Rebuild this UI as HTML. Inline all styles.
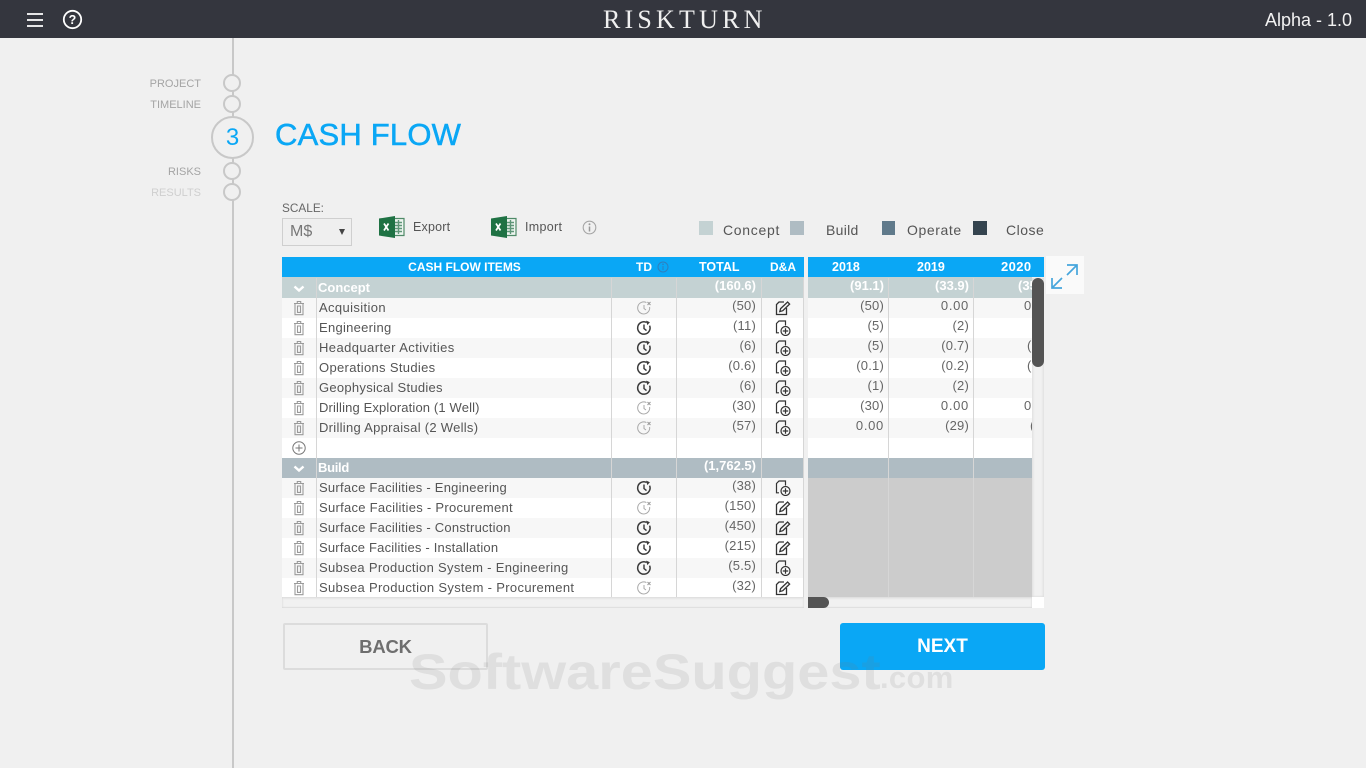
<!DOCTYPE html>
<html><head><meta charset="utf-8"><title>Riskturn</title>
<style>
html,body{margin:0;padding:0;width:1366px;height:768px;overflow:hidden;background:#f0f0f0;font-family:"Liberation Sans",sans-serif;color:#555}
.a{position:absolute;white-space:nowrap}
.bg{position:absolute}
.step{position:absolute;right:1165px;font-size:11px;color:#a4a4a4;white-space:nowrap;line-height:14px}
.c{position:absolute;width:14px;height:14px;border:2px solid #c8c8c8;border-radius:50%;left:223px;background:#f0f0f0}
.row{position:absolute;left:282px;width:522px;height:20px}
.rrow{position:absolute;left:808px;width:224px;height:20px}
.t{position:absolute;left:37px;top:0;line-height:20px;font-size:13px;color:#555;letter-spacing:.28px;white-space:nowrap}
.v{position:absolute;top:-2px;line-height:20px;font-size:13px;color:#666;text-align:right;white-space:nowrap;letter-spacing:.2px}
.tot{right:48px}
.y1{right:148px}.y2{right:63px}
.ic{position:absolute}
.h{position:absolute;top:257px;height:20px;line-height:20px;color:#fff;font-weight:bold;font-size:12px;white-space:nowrap;text-align:center}
.ln{position:absolute;width:1px;background:#d6d6d6}
.gh{color:#fff;font-weight:bold;font-size:13px}
</style></head><body>
<svg width="0" height="0" style="position:absolute"><defs>
<symbol id="trash" viewBox="0 0 12 16"><path d="M1 3.500h10M4.300 3.300V1.500h3.400v1.800M2 3.500v11.200h8V3.500M4.500 6v6.400h3V6z" fill="none" stroke="#9a9a9a" stroke-width="1.100"/></symbol>
<symbol id="clock" viewBox="0 0 16 16"><path d="M10.600 2.400A6.200 6.200 0 1 0 13.600 5.600" fill="none" stroke="#3a3a3a" stroke-width="1.500"/><path d="M8 4.500V8.600L10.500 10.600" fill="none" stroke="#3a3a3a" stroke-width="1.400"/><path d="M10.200 .6l3.700 1.600-2.600 2.900z" fill="#3a3a3a"/></symbol>
<symbol id="clockx" viewBox="0 0 16 16"><path d="M10.400 2.600A6 6 0 1 0 13.600 7" fill="none" stroke="#a8a8a8" stroke-width="1"/><path d="M8 5V8.500L10 10" fill="none" stroke="#a8a8a8"/><path d="M11.500 2l3 3M14.500 2l-3 3" stroke="#999" stroke-width="1"/></symbol>
<symbol id="edit" viewBox="0 0 16 16"><path d="M9 2H4L1.500 4.500V14.500H11.500V8" fill="none" stroke="#333" stroke-width="1.300"/><path d="M4.800 11.600l.8-3 7-6.600 2 2.100-6.800 6.600z" fill="#f4f4f4" stroke="#333" stroke-width="1.300"/></symbol>
<symbol id="add" viewBox="0 0 16 16"><path d="M4 12.800H1.500V3.500L4 1H10.500V5.500" fill="none" stroke="#333" stroke-width="1.200"/><circle cx="10.500" cy="11" r="4.500" fill="#fafafa" stroke="#333" stroke-width="1.200"/><path d="M10.500 8.300v5.400M7.800 11h5.400" stroke="#333" stroke-width="1.200"/></symbol>
<symbol id="xl" viewBox="0 0 26 22"><path d="M13 2.500H25V19.500H13z" fill="#eef5f0" stroke="#4f8a68" stroke-width="1.200"/><path d="M16 6.500h7M16 9.500h7M16 12.500h7M16 15.500h7M19.500 4v14" stroke="#5f9678" stroke-width="1.400"/><path d="M0 2.500L16 0V22L0 19.500z" fill="#1f7244"/><path d="M5 7.500l4.500 7M9.500 7.500l-4.500 7" stroke="#fff" stroke-width="1.700"/></symbol>
</defs></svg>

<!-- top bar -->
<div class="bg" style="left:0;top:0;width:1366px;height:38px;background:#34363e"></div>
<svg class="a" style="left:27px;top:13px" width="17" height="15"><path d="M0 1h16M0 7h16M0 13h16" stroke="#fff" stroke-width="1.800"/></svg>
<svg class="a" style="left:62px;top:9px" width="21" height="21"><circle cx="10.500" cy="10.500" r="8.700" fill="none" stroke="#fff" stroke-width="1.800"/><text x="10.500" y="15" text-anchor="middle" font-family="Liberation Sans" font-weight="bold" font-size="12.500" fill="#fff">?</text></svg>
<div class="a" style="left:603px;top:6px;font-family:'Liberation Serif',serif;font-size:26px;line-height:28px;color:#f0f0f0;letter-spacing:4.200px">RISKTURN</div>
<div class="a" style="right:14px;top:9px;font-size:18px;line-height:22px;color:#f2f2f2">Alpha - 1.0</div>

<!-- stepper -->
<div class="bg" style="left:232px;top:38px;width:2px;height:730px;background:#c8c8c8"></div>
<div class="c" style="top:74px"></div>
<div class="c" style="top:95px"></div>
<div class="c" style="top:162px"></div>
<div class="c" style="top:183px"></div>
<div class="a" style="left:211px;top:116px;width:39px;height:39px;border:2px solid #c8c8c8;border-radius:50%;background:#f0f0f0;color:#0aa7f5;font-size:24px;line-height:40px;text-align:center">3</div>
<div class="step" style="top:77px">PROJECT</div>
<div class="step" style="top:98px">TIMELINE</div>
<div class="step" style="top:165px">RISKS</div>
<div class="step" style="top:186px;color:#cfcfcf">RESULTS</div>
<div class="a" style="left:275px;top:116px;color:#0aa7f5;font-size:31px;line-height:38px;letter-spacing:.2px;-webkit-text-stroke:.5px #0aa7f5">CASH FLOW</div>

<!-- toolbar -->
<div class="a" style="left:282px;top:201px;font-size:11.800px;line-height:14px;color:#666">SCALE:</div>
<div class="a" style="left:282px;top:218px;width:68px;height:26px;border:1px solid #cfcfcf;background:#efefef;font-size:16px;line-height:25px;color:#777;text-indent:7px">M$</div>
<div class="a" style="left:339px;top:229px;width:0;height:0;border-left:3.500px solid transparent;border-right:3.500px solid transparent;border-top:6px solid #444"></div>
<svg class="a" style="left:379px;top:216px" width="26" height="22"><use href="#xl"/></svg>
<div class="a" style="left:413px;top:219px;font-size:12.500px;line-height:16px;color:#555;letter-spacing:.2px">Export</div>
<svg class="a" style="left:491px;top:216px" width="26" height="22"><use href="#xl"/></svg>
<div class="a" style="left:525px;top:219px;font-size:12.500px;line-height:16px;color:#555;letter-spacing:.3px">Import</div>
<svg class="a" style="left:582px;top:220px" width="15" height="15"><circle cx="7.500" cy="7.500" r="6.300" fill="none" stroke="#a5a5a5" stroke-width="1.100"/><path d="M7.500 6.500V11.500" stroke="#999" stroke-width="1.500"/><circle cx="7.500" cy="4.300" r="1" fill="#999"/></svg>

<!-- legend -->
<div class="bg" style="left:699px;top:221px;width:14px;height:14px;background:#c4d2d3"></div>
<div class="a" style="left:723px;top:221px;font-size:14px;line-height:18px;letter-spacing:.7px">Concept</div>
<div class="bg" style="left:790px;top:221px;width:14px;height:14px;background:#afbcc3"></div>
<div class="a" style="left:826px;top:221px;font-size:14px;line-height:18px;letter-spacing:.3px">Build</div>
<div class="bg" style="left:882px;top:221px;width:13px;height:14px;background:#607a8b"></div>
<div class="a" style="left:907px;top:221px;font-size:14px;line-height:18px;letter-spacing:.6px">Operate</div>
<div class="bg" style="left:973px;top:221px;width:14px;height:14px;background:#35444f"></div>
<div class="a" style="left:1006px;top:221px;font-size:14px;line-height:18px;letter-spacing:.5px">Close</div>

<!-- left table header -->
<div class="bg" style="left:282px;top:257px;width:522px;height:20px;background:#0aa7f5"></div>
<div class="h" style="left:317px;width:295px">CASH FLOW ITEMS</div>
<div class="h" style="left:636px">TD</div>
<svg class="a" style="left:657px;top:261px" width="12" height="12"><circle cx="6" cy="6" r="5" fill="none" stroke="#2f7fbd"/><path d="M6 5v4" stroke="#2f7fbd"/><circle cx="6" cy="3.300" r=".8" fill="#2f7fbd"/></svg>
<div class="h" style="left:699px;font-size:12.500px">TOTAL</div>
<div class="h" style="left:770px">D&amp;A</div>
<div class="bg" style="left:808px;top:257px;width:236px;height:20px;background:#0aa7f5"></div>
<div class="h" style="left:832px;font-size:12.500px">2018</div>
<div class="h" style="left:917px;font-size:12.500px">2019</div>
<div class="h" style="left:1001px;font-size:13px;letter-spacing:.4px">2020</div>
<div class="bg" style="left:1046px;top:256px;width:38px;height:38px;background:#fafafa"></div>
<svg class="a" style="left:1046px;top:256px" width="38" height="38"><path d="M31 9L21 19M21 9H31V19M6 32L16 22M6 22V32H16" fill="none" stroke="#45a5dc" stroke-width="1.700"/></svg>

<!-- left rows -->
<div class="row" style="top:277px;height:21px;background:#c4d2d3"><div class="t gh" style="letter-spacing:0;left:36px;top:1px">Concept</div><div class="v tot" style="color:#fff;font-weight:bold;top:-1px;letter-spacing:0">(160.6)</div></div>
<div class="row" style="top:298px;background:#f7f7f7"><div class="t" style="letter-spacing:.37px">Acquisition</div><div class="v tot">(50)</div></div>
<div class="row" style="top:318px;background:#fff"><div class="t">Engineering</div><div class="v tot">(11)</div></div>
<div class="row" style="top:338px;background:#f7f7f7"><div class="t" style="letter-spacing:.42px">Headquarter Activities</div><div class="v tot">(6)</div></div>
<div class="row" style="top:358px;background:#fff"><div class="t" style="letter-spacing:.33px">Operations Studies</div><div class="v tot">(0.6)</div></div>
<div class="row" style="top:378px;background:#f7f7f7"><div class="t">Geophysical Studies</div><div class="v tot">(6)</div></div>
<div class="row" style="top:398px;background:#fff"><div class="t" style="letter-spacing:.14px">Drilling Exploration (1 Well)</div><div class="v tot">(30)</div></div>
<div class="row" style="top:418px;background:#f7f7f7"><div class="t">Drilling Appraisal (2 Wells)</div><div class="v tot">(57)</div></div>
<div class="row" style="top:438px;background:#fff"></div>
<div class="row" style="top:458px;background:#afbcc3"><div class="t gh" style="letter-spacing:-.3px;left:36px">Build</div><div class="v tot" style="color:#fff;font-weight:bold;letter-spacing:0">(1,762.5)</div></div>
<div class="row" style="top:478px;background:#f7f7f7"><div class="t" style="letter-spacing:.25px">Surface Facilities - Engineering</div><div class="v tot">(38)</div></div>
<div class="row" style="top:498px;background:#fff"><div class="t">Surface Facilities - Procurement</div><div class="v tot">(150)</div></div>
<div class="row" style="top:518px;background:#f7f7f7"><div class="t" style="letter-spacing:.25px">Surface Facilities - Construction</div><div class="v tot">(450)</div></div>
<div class="row" style="top:538px;background:#fff"><div class="t" style="letter-spacing:.2px">Surface Facilities - Installation</div><div class="v tot">(215)</div></div>
<div class="row" style="top:558px;background:#f7f7f7"><div class="t" style="letter-spacing:.31px">Subsea Production System - Engineering</div><div class="v tot">(5.5)</div></div>
<div class="row" style="top:578px;background:#fff;height:19px"><div class="t" style="letter-spacing:.33px">Subsea Production System - Procurement</div><div class="v tot">(32)</div></div>
<div class="ln" style="left:316px;top:278px;height:319px"></div>
<div class="ln" style="left:611px;top:278px;height:319px"></div>
<div class="ln" style="left:676px;top:278px;height:319px"></div>
<div class="ln" style="left:761px;top:278px;height:319px"></div>
<div class="ln" style="left:803px;top:278px;height:319px"></div>

<!-- chevrons -->
<svg class="a" style="left:293px;top:285px" width="12" height="8"><path d="M1.500 1.500L6 5.500L10.500 1.500" fill="none" stroke="#fff" stroke-width="2.400"/></svg>
<svg class="a" style="left:293px;top:465px" width="12" height="8"><path d="M1.500 1.500L6 5.500L10.500 1.500" fill="none" stroke="#fff" stroke-width="2.400"/></svg>
<svg class="a" style="left:292px;top:441px" width="14" height="14"><circle cx="7" cy="7" r="6.200" fill="none" stroke="#777"/><path d="M7 3.500v7M3.500 7h7" stroke="#777"/></svg>

<!-- trash icons -->
<svg class="ic" style="left:293px;top:300px" width="12" height="16"><use href="#trash"/></svg>
<svg class="ic" style="left:293px;top:320px" width="12" height="16"><use href="#trash"/></svg>
<svg class="ic" style="left:293px;top:340px" width="12" height="16"><use href="#trash"/></svg>
<svg class="ic" style="left:293px;top:360px" width="12" height="16"><use href="#trash"/></svg>
<svg class="ic" style="left:293px;top:380px" width="12" height="16"><use href="#trash"/></svg>
<svg class="ic" style="left:293px;top:400px" width="12" height="16"><use href="#trash"/></svg>
<svg class="ic" style="left:293px;top:420px" width="12" height="16"><use href="#trash"/></svg>
<svg class="ic" style="left:293px;top:480px" width="12" height="16"><use href="#trash"/></svg>
<svg class="ic" style="left:293px;top:500px" width="12" height="16"><use href="#trash"/></svg>
<svg class="ic" style="left:293px;top:520px" width="12" height="16"><use href="#trash"/></svg>
<svg class="ic" style="left:293px;top:540px" width="12" height="16"><use href="#trash"/></svg>
<svg class="ic" style="left:293px;top:560px" width="12" height="16"><use href="#trash"/></svg>
<svg class="ic" style="left:293px;top:580px" width="12" height="16"><use href="#trash"/></svg>

<!-- clocks -->
<svg class="ic" style="left:636px;top:300px" width="16" height="16"><use href="#clockx"/></svg>
<svg class="ic" style="left:636px;top:320px" width="16" height="16"><use href="#clock"/></svg>
<svg class="ic" style="left:636px;top:340px" width="16" height="16"><use href="#clock"/></svg>
<svg class="ic" style="left:636px;top:360px" width="16" height="16"><use href="#clock"/></svg>
<svg class="ic" style="left:636px;top:380px" width="16" height="16"><use href="#clock"/></svg>
<svg class="ic" style="left:636px;top:400px" width="16" height="16"><use href="#clockx"/></svg>
<svg class="ic" style="left:636px;top:420px" width="16" height="16"><use href="#clockx"/></svg>
<svg class="ic" style="left:636px;top:480px" width="16" height="16"><use href="#clock"/></svg>
<svg class="ic" style="left:636px;top:500px" width="16" height="16"><use href="#clockx"/></svg>
<svg class="ic" style="left:636px;top:520px" width="16" height="16"><use href="#clock"/></svg>
<svg class="ic" style="left:636px;top:540px" width="16" height="16"><use href="#clock"/></svg>
<svg class="ic" style="left:636px;top:560px" width="16" height="16"><use href="#clock"/></svg>
<svg class="ic" style="left:636px;top:580px" width="16" height="16"><use href="#clockx"/></svg>

<!-- D&A -->
<svg class="ic" style="left:775px;top:300px" width="16" height="16"><use href="#edit"/></svg>
<svg class="ic" style="left:775px;top:320px" width="16" height="16"><use href="#add"/></svg>
<svg class="ic" style="left:775px;top:340px" width="16" height="16"><use href="#add"/></svg>
<svg class="ic" style="left:775px;top:360px" width="16" height="16"><use href="#add"/></svg>
<svg class="ic" style="left:775px;top:380px" width="16" height="16"><use href="#add"/></svg>
<svg class="ic" style="left:775px;top:400px" width="16" height="16"><use href="#add"/></svg>
<svg class="ic" style="left:775px;top:420px" width="16" height="16"><use href="#add"/></svg>
<svg class="ic" style="left:775px;top:480px" width="16" height="16"><use href="#add"/></svg>
<svg class="ic" style="left:775px;top:500px" width="16" height="16"><use href="#edit"/></svg>
<svg class="ic" style="left:775px;top:520px" width="16" height="16"><use href="#edit"/></svg>
<svg class="ic" style="left:775px;top:540px" width="16" height="16"><use href="#edit"/></svg>
<svg class="ic" style="left:775px;top:560px" width="16" height="16"><use href="#add"/></svg>
<svg class="ic" style="left:775px;top:580px" width="16" height="16"><use href="#edit"/></svg>

<!-- right rows -->
<div class="rrow" style="top:277px;height:21px;background:#c4d2d3;overflow:hidden"><div class="v y1" style="color:#fff;font-weight:bold;letter-spacing:0;top:-1px">(91.1)</div><div class="v y2" style="color:#fff;font-weight:bold;letter-spacing:0;top:-1px">(33.9)</div><div class="v" style="left:210px;top:-1px;color:#fff;font-weight:bold;letter-spacing:0">(35</div></div>
<div class="rrow" style="top:298px;background:#f7f7f7;overflow:hidden"><div class="v y1">(50)</div><div class="v y2" style="letter-spacing:.7px">0.00</div><div class="v" style="left:216px">0</div></div>
<div class="rrow" style="top:318px;background:#fff;overflow:hidden"><div class="v y1">(5)</div><div class="v y2">(2)</div></div>
<div class="rrow" style="top:338px;background:#f7f7f7;overflow:hidden"><div class="v y1">(5)</div><div class="v y2">(0.7)</div><div class="v" style="left:219px">(0</div></div>
<div class="rrow" style="top:358px;background:#fff;overflow:hidden"><div class="v y1">(0.1)</div><div class="v y2">(0.2)</div><div class="v" style="left:219px">(0</div></div>
<div class="rrow" style="top:378px;background:#f7f7f7;overflow:hidden"><div class="v y1">(1)</div><div class="v y2">(2)</div></div>
<div class="rrow" style="top:398px;background:#fff;overflow:hidden"><div class="v y1">(30)</div><div class="v y2" style="letter-spacing:.7px">0.00</div><div class="v" style="left:216px">0</div></div>
<div class="rrow" style="top:418px;background:#f7f7f7;overflow:hidden"><div class="v y1" style="letter-spacing:.7px">0.00</div><div class="v y2">(29)</div><div class="v" style="left:222px">(</div></div>
<div class="rrow" style="top:438px;background:#fff"></div>
<div class="rrow" style="top:458px;background:#afbcc3"></div>
<div class="rrow" style="top:478px;height:119px;background:#cccccc"></div>
<div class="ln" style="left:888px;top:278px;height:319px"></div>
<div class="ln" style="left:973px;top:278px;height:319px"></div>

<!-- scrollbars -->
<div class="bg" style="left:1032px;top:278px;width:12px;height:319px;background:#f1f1f1;box-shadow:inset 1px 0 2px #ddd,inset -1px 0 2px #ddd"></div>
<div class="bg" style="left:1032px;top:278px;width:12px;height:89px;background:#545454;border-radius:6px"></div>
<div class="bg" style="left:282px;top:597px;width:522px;height:11px;background:#f1f1f1;box-shadow:inset 0 1px 2px #d8d8d8,inset 0 -1px 1px #ddd"></div>
<div class="bg" style="left:808px;top:597px;width:224px;height:11px;background:#f1f1f1;box-shadow:inset 0 1px 2px #d8d8d8,inset 0 -1px 1px #ddd"></div>
<div class="bg" style="left:808px;top:597px;width:21px;height:11px;background:#545454;border-radius:0 6px 6px 0"></div>
<div class="bg" style="left:1032px;top:597px;width:12px;height:11px;background:#fff"></div>

<!-- buttons -->
<div class="a" style="left:283px;top:623px;width:201px;height:43px;border:2px solid #dcdcdc;border-radius:2px;text-align:center;line-height:44px;font-size:18.500px;letter-spacing:-.2px;font-weight:bold;color:#6e6e6e">BACK</div>
<div class="a" style="left:840px;top:623px;width:205px;height:47px;background:#0aa7f5;border-radius:3px;text-align:center;line-height:48px;font-size:19px;font-weight:bold;color:#fff">NEXT</div>

<!-- watermark -->
<div class="a" style="left:409px;top:641px;font-size:50px;line-height:62px;font-weight:bold;color:rgba(120,120,120,.14);transform:scaleX(1.155);transform-origin:0 0">SoftwareSuggest</div>
<div class="a" style="left:880px;top:658px;font-size:31px;line-height:40px;font-weight:bold;color:rgba(120,120,120,.14);letter-spacing:.3px">.com</div>
</body></html>
